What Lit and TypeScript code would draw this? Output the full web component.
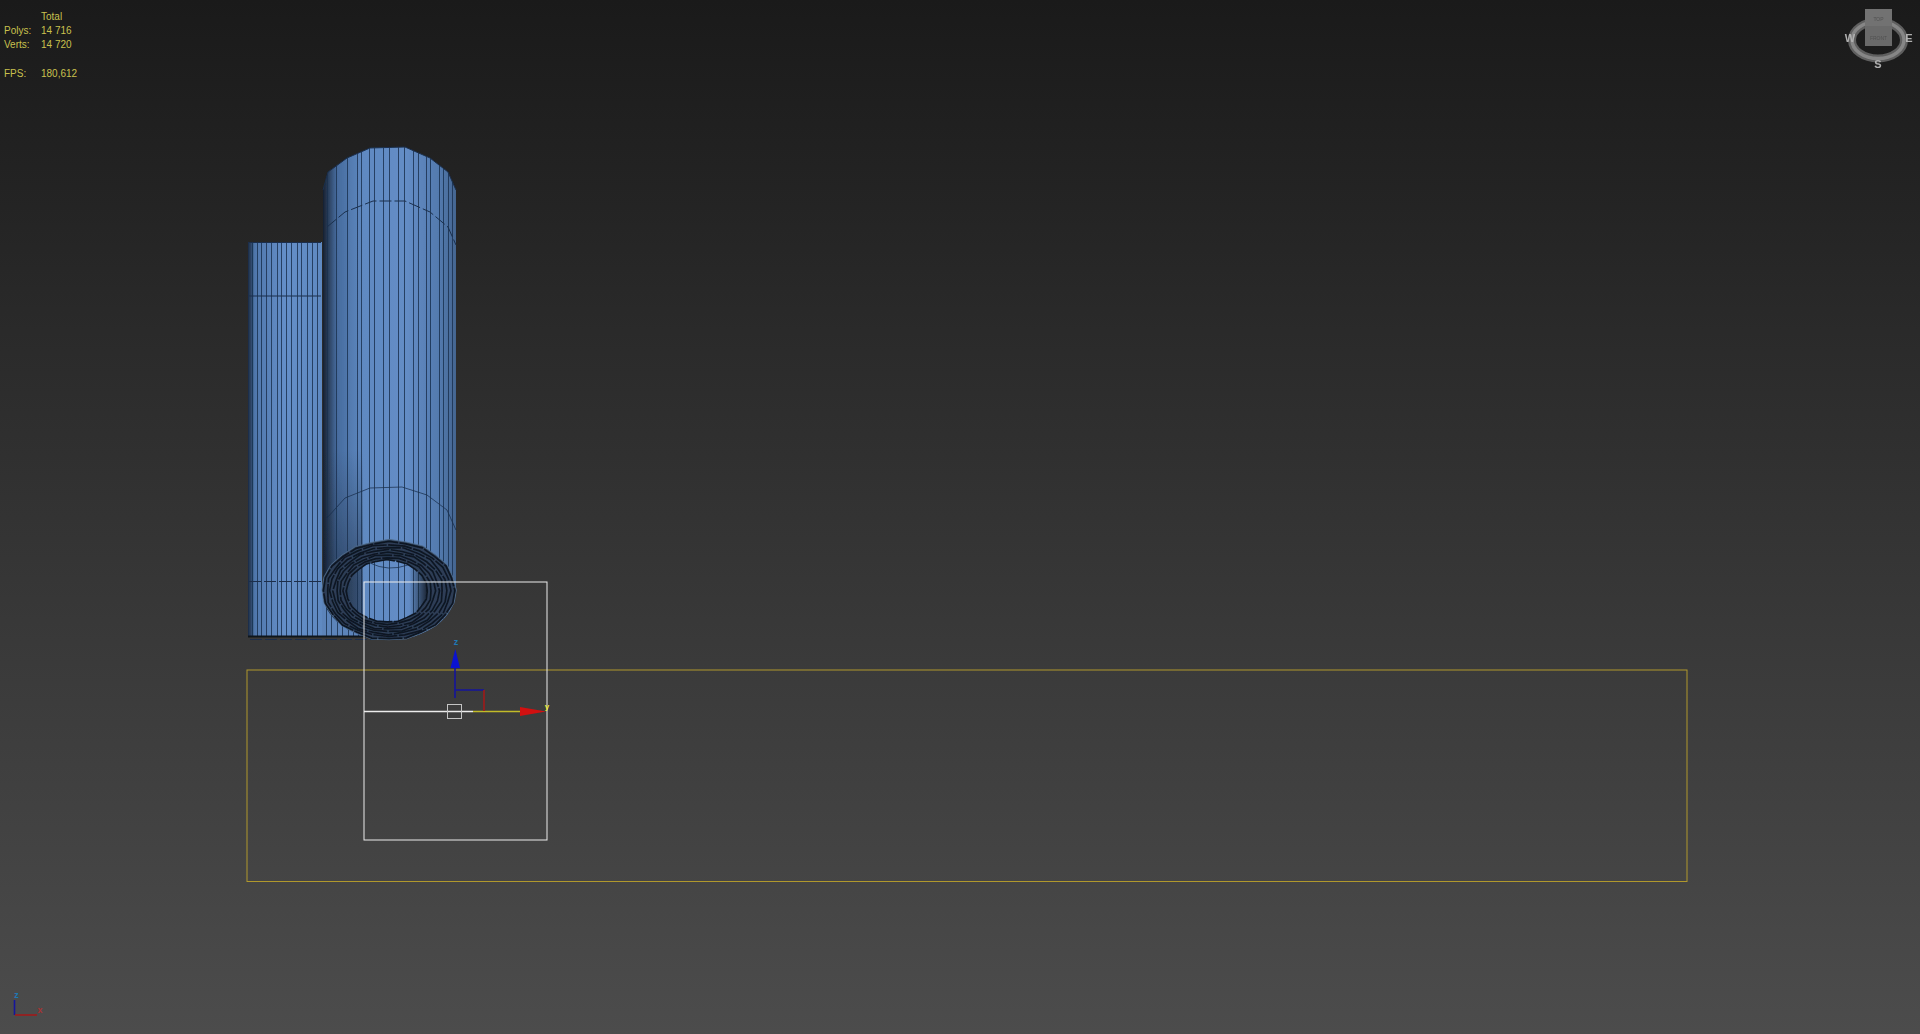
import { LitElement, html, svg, css } from "lit";
import { customElement } from "lit/decorators.js";

const BIG_X = [327.5, 336.5, 347.5, 357.5, 361.5, 369.5, 374.5, 383.5, 389.5, 398.5, 404.5, 413.5, 418.5, 426.5, 430.5, 439.5, 443.5, 448.5, 452.5];
const BOX_X = [252.5, 257.5, 261.5, 266.5, 271.5, 277.5, 281.5, 286.5, 291.5, 297.5, 301.5, 307.5, 312.5, 317.5];
const FOOT_X = [326.5, 331.5, 337.5, 342.5, 348.5, 353.5, 358.5];

const poly = (pts: number[][]) => pts.map((p) => p.join(",")).join(" ");
const CAP = [[323, 190], [328, 172], [347, 158], [370, 148], [405, 147], [430, 158], [448, 172], [456, 190]];
const EDGE1 = [[327, 227], [345, 212], [373, 201], [405, 201], [430, 212], [448, 227], [456, 245]];
const EDGE2 = [[327, 518], [345, 498], [370, 488], [402, 487], [427, 495], [447, 510], [456, 530]];

// A faceted, irregular ring outline, as the wireframe of a turned tube end.
function ringLoop(cx: number, cy: number, rx: number, ry: number, phase: number, amp = 0.012): string {
  const n = 24;
  let d = "";
  for (let i = 0; i < n; i++) {
    const a = (i / n) * Math.PI * 2;
    const j = 1 + amp * Math.sin(i * 2.9 + phase) + amp * 0.5 * Math.cos(i * 5.3 + phase * 2);
    const x = cx + rx * j * Math.cos(a);
    const y = cy + ry * j * Math.sin(a);
    d += `${i ? "L" : "M"}${x.toFixed(1)} ${y.toFixed(1)}`;
  }
  return d + "Z";
}

const RINGS = Array.from({ length: 8 }, (_, i) => {
  const t = i / 7;
  return {
    cx: 389 - 2 * t,
    cy: 590.5 + 0.5 * t,
    rx: 65.5 - 25 * t,
    ry: 48.5 - 17.5 * t,
    phase: i * 1.7,
  };
});

@customElement("app-root")
export class AppRoot extends LitElement {
  static styles = css`
    :host {
      display: block;
      position: relative;
      width: 1920px;
      height: 1034px;
      overflow: hidden;
      background: linear-gradient(180deg, #1a1a1a 0%, #4c4c4c 100%);
    }
    .scene {
      position: absolute;
      inset: 0;
      display: block;
    }
    .stats {
      position: absolute;
      left: 4px;
      top: 10px;
      display: grid;
      grid-template-columns: 37px auto;
      grid-auto-rows: 14.2px;
      font: 10px/14px "Liberation Sans", Arial, sans-serif;
      color: #c9c14e;
    }
    .gap {
      grid-column: 1 / 3;
    }
    .mesh {
      stroke: #1a2f4e;
      stroke-width: 1;
      fill: none;
      opacity: 0.82;
    }
    .edge {
      stroke: #1a2f4c;
      stroke-width: 1;
      fill: none;
    }
    .soft {
      opacity: 0.75;
    }
    .dashed {
      stroke-dasharray: 12 3;
    }
    .heavy {
      stroke: #10151d;
      stroke-width: 2;
    }
    .ringline {
      fill: none;
      stroke: #0f1724;
      stroke-width: 1.7;
      stroke-dasharray: 24 1.5;
    }
    .ringglow {
      fill: none;
      stroke: #53708f;
      stroke-width: 0.8;
    }
    .ringbody {
      fill: #2d3e56;
      fill-rule: evenodd;
    }
    .frame {
      fill: none;
      stroke: #ececec;
      stroke-width: 1;
    }
    .bound {
      fill: none;
      stroke: #b0982c;
      stroke-width: 1;
    }
    .white {
      stroke: #ececec;
      stroke-width: 1.4;
    }
    .yellow {
      stroke: #c2bb28;
      stroke-width: 1.6;
    }
    .blue {
      stroke: #15159c;
      stroke-width: 1.6;
      fill: none;
    }
    .red {
      stroke: #a01a1a;
      stroke-width: 1.6;
      fill: none;
    }
    .pivot {
      fill: none;
      stroke: #c4c4c4;
      stroke-width: 1;
    }
    .bluefill {
      fill: #0a12d0;
    }
    .redfill {
      fill: #d21010;
    }
    .lab {
      font: 9px "Liberation Sans", Arial, sans-serif;
      text-anchor: middle;
    }
    .lab-z {
      fill: #1f78b4;
      font-weight: bold;
    }
    .lab-x {
      fill: #a83232;
      font-weight: bold;
    }
    .lab-y {
      fill: #eeea30;
      font-weight: bold;
      font-size: 8px;
    }
    .compass-out {
      fill: none;
      stroke: #5e5e5e;
      stroke-width: 8;
    }
    .compass-in {
      fill: none;
      stroke: #868686;
      stroke-width: 3.5;
    }
    .cube-top {
      fill: #727272;
    }
    .cube-front {
      fill: #6a6a6a;
    }
    .cube-lab {
      font: 5px "Liberation Sans", Arial, sans-serif;
      fill: #515151;
      text-anchor: middle;
    }
    .dir {
      font: bold 11px "Liberation Sans", Arial, sans-serif;
      fill: #b0b0b0;
      text-anchor: middle;
    }
  `;

  render() {
    return html`
      <svg class="scene" width="1920" height="1034" viewBox="0 0 1920 1034">
        <defs>
          <linearGradient id="boxFill" x1="0" x2="1" y1="0" y2="0">
            <stop offset="0" stop-color="#1f3049" />
            <stop offset="0.04" stop-color="#2c4465" />
            <stop offset="0.09" stop-color="#5077ac" />
            <stop offset="0.5" stop-color="#648ec7" />
            <stop offset="1" stop-color="#5f89c1" />
          </linearGradient>
          <linearGradient id="bigFill" x1="0" x2="1" y1="0" y2="0">
            <stop offset="0" stop-color="#172130" />
            <stop offset="0.04" stop-color="#2b3f5c" />
            <stop offset="0.1" stop-color="#456a9c" />
            <stop offset="0.3" stop-color="#5f89c1" />
            <stop offset="0.62" stop-color="#648dc6" />
            <stop offset="0.88" stop-color="#5279ad" />
            <stop offset="1" stop-color="#446590" />
          </linearGradient>
          <linearGradient id="lowShade" x1="0" x2="0" y1="0" y2="1">
            <stop offset="0" stop-color="#131c2a" stop-opacity="0" />
            <stop offset="0.7" stop-color="#131c2a" stop-opacity="0.45" />
            <stop offset="1" stop-color="#131c2a" stop-opacity="0.45" />
          </linearGradient>
          <linearGradient id="holeShade" x1="0" x2="1" y1="0" y2="0">
            <stop offset="0" stop-color="#1a2636" stop-opacity="0.4" />
            <stop offset="0.2" stop-color="#1a2636" stop-opacity="0" />
            <stop offset="0.78" stop-color="#1a2636" stop-opacity="0" />
            <stop offset="1" stop-color="#10161f" stop-opacity="0.85" />
          </linearGradient>
          <clipPath id="tube">
            <path d="M323 190 L328 172 L347 158 L370 148 L405 147 L430 158 L448 172 L456 190 V590 A67 50 0 0 1 322 590 Z" />
          </clipPath>
          <filter id="soft" x="-5%" y="-5%" width="110%" height="110%">
            <feGaussianBlur stdDeviation="0.4" />
          </filter>
        </defs>

        <g filter="url(#soft)">
          <rect x="248" y="242" width="74" height="395" fill="url(#boxFill)" />
          <path class="edge" d="M248.5 637V242.5H321" />
          ${BOX_X.map((x) => svg`<line class="mesh" x1=${x} x2=${x} y1="243" y2="636" />`)}
          <line class="edge" x1="249" x2="321" y1="296" y2="296" />
          <line class="edge dashed" x1="249" x2="345" y1="581.5" y2="581.5" />

          <rect x="322" y="590" width="50" height="47" fill="#5b84ba" />
          ${FOOT_X.map((x) => svg`<line class="mesh" x1=${x} x2=${x} y1="590" y2="636" />`)}

          <g clip-path="url(#tube)">
            <rect x="323" y="147" width="133" height="495" fill="url(#bigFill)" />
            <rect x="323" y="450" width="40" height="190" fill="url(#lowShade)" />
            ${BIG_X.map((x) => svg`<line class="mesh" x1=${x} x2=${x} y1="147" y2="642" />`)}
          </g>
          <polyline class="edge" points=${poly(CAP)} />
          <polyline class="edge dashed" points=${poly(EDGE1)} />
          <polyline class="edge soft" points=${poly(EDGE2)} />
          <path class="edge soft" d="M370 563 Q388 572 408 565" />
          <ellipse cx="387" cy="591" rx="40" ry="31" fill="url(#holeShade)" />

          <line class="edge heavy" x1="248" x2="368" y1="636.5" y2="636.5" />
          <line class="edge dashed" x1="250" x2="375" y1="639.5" y2="639.5" />

          <path class="ringbody" d=${ringLoop(389, 590, 67, 50, 0) + ringLoop(387, 591, 40, 31, 8)} />
          <path class="ringglow" d=${ringLoop(389, 590, 67, 50, 0)} />
          ${RINGS.map((r) => svg`<path class="ringline" d=${ringLoop(r.cx, r.cy, r.rx, r.ry, r.phase)} />`)}
        </g>

        <rect class="bound" x="247" y="670" width="1440" height="211.5" />
        <rect class="frame" x="364" y="582" width="183" height="258" />

        <line class="white" x1="364" x2="473" y1="711.5" y2="711.5" />
        <line class="yellow" x1="473" x2="522" y1="711.5" y2="711.5" />
        <rect class="pivot" x="447.5" y="704.5" width="14" height="14" />
        <path class="blue" d="M455 668V698M455 690H484" />
        <path class="red" d="M484 690V711" />
        <path class="bluefill" d="M455.3 649 L450.5 668 H460 Z" />
        <path class="redfill" d="M520 707 L546 711.5 L520 716 Z" />
        <text class="lab lab-z" x="456" y="645">z</text>
        <text class="lab lab-y" x="547" y="709">y</text>

        <path class="blue" d="M14.5 1000V1015" />
        <path class="red" d="M15 1015H37" />
        <text class="lab lab-z" x="16.5" y="998">z</text>
        <text class="lab lab-x" x="40" y="1013">x</text>

        <g filter="url(#soft)">
          <ellipse class="compass-out" cx="1878" cy="40" rx="26" ry="18.5" />
          <ellipse class="compass-in" cx="1878" cy="40" rx="26" ry="18.5" />
          <rect class="cube-top" x="1865" y="9" width="27" height="17" />
          <rect class="cube-front" x="1865" y="26" width="27" height="20" />
          <text class="cube-lab" x="1878.5" y="21">TOP</text>
          <text class="cube-lab" x="1878.5" y="40">FRONT</text>
          <text class="dir" x="1850" y="42">W</text>
          <text class="dir" x="1909" y="42">E</text>
          <text class="dir" x="1878" y="68">S</text>
        </g>
      </svg>

      <div class="stats">
        <span></span><span>Total</span>
        <span>Polys:</span><span>14 716</span>
        <span>Verts:</span><span>14 720</span>
        <span class="gap"></span>
        <span>FPS:</span><span>180,612</span>
      </div>
    `;
  }
}
